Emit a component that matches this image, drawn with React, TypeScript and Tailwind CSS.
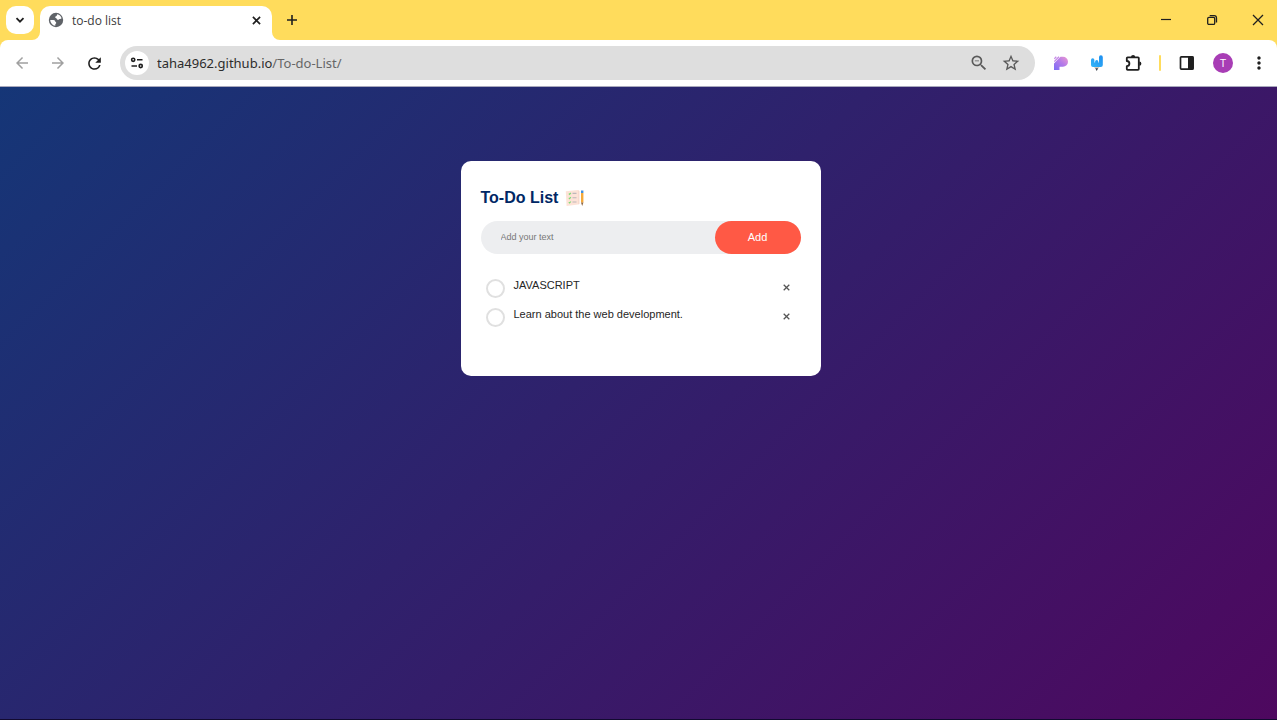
import { useState } from 'react'
import type { FormEvent, ReactNode } from 'react'
import {
  MdArrowBack,
  MdArrowForward,
  MdMoreVert,
  MdRefresh,
  MdStarOutline,
  MdZoomOut,
} from 'react-icons/md'

interface Task {
  id: number
  text: string
  done: boolean
}

const initialTasks: Task[] = [
  { id: 1, text: 'JAVASCRIPT', done: false },
  { id: 2, text: 'Learn about the web development.', done: false },
]

interface IconButtonProps {
  label: string
  className?: string
  children: ReactNode
}

function IconButton({ label, className = 'w-9 h-9', children }: IconButtonProps) {
  return (
    <button
      type="button"
      aria-label={label}
      className={`flex shrink-0 items-center justify-center ${className}`}
    >
      {children}
    </button>
  )
}

function CloseIcon({ size }: { size: number }) {
  return (
    <svg width={size} height={size} viewBox="0 0 10 10" fill="none" stroke="currentColor">
      <path d="M1 1l8 8M9 1l-8 8" strokeWidth="1.8" />
    </svg>
  )
}

function GlobeIcon() {
  return (
    <svg width="16" height="16" viewBox="0 0 16 16">
      <circle cx="8" cy="8" r="7.2" fill="#5f6368" />
      <path
        d="M9.3 2.3c2 .4 3.7 1.9 4.3 4-.9 1-2 .4-2.6 1.100-.8.9-2 .3-2.3-.6-.3-.9-1.600-.5-1.500-1.600.1-1 1.500-.8 1.600-1.600.1-.5.2-.9.5-1.300zM2.200 7.900h3.200c1.200 0 1.900.8 1.900 1.700 0 .7.9.5.9 1.300 0 .9-.9.7-.9 1.600v1.200c-2.900-.4-5-2.800-5.100-5.800z"
        fill="#fff"
      />
    </svg>
  )
}

function TabStrip() {
  return (
    <div className="flex h-10 items-start bg-[#ffdc5c] pt-1.5 pl-1.5 text-[#1f1f1f]">
      <IconButton label="Search tabs" className="h-7 w-7 rounded-[10px] bg-white">
        <svg width="10" height="10" viewBox="0 0 10 10" fill="none" stroke="currentColor">
          <path d="M1.5 3.2L5 6.7l3.5-3.5" strokeWidth="1.8" />
        </svg>
      </IconButton>
      <div className="relative ml-1.5 flex h-[34px] w-[232px] items-center rounded-t-[10px] bg-white pr-[10px] pb-1.5 pl-2">
        <svg className="absolute bottom-0 -left-2" width="8" height="8" viewBox="0 0 8 8">
          <path d="M8 0v8H0a8 8 0 0 0 8-8z" fill="#fff" />
        </svg>
        <svg className="absolute -right-2 bottom-0" width="8" height="8" viewBox="0 0 8 8">
          <path d="M0 0v8h8a8 8 0 0 1-8-8z" fill="#fff" />
        </svg>
        <GlobeIcon />
        <span className="ml-2 flex-1 pt-0.5 text-[12px] text-[#3c3c3c]">to-do list</span>
        <IconButton label="Close tab" className="h-3 w-3">
          <CloseIcon size={9} />
        </IconButton>
      </div>
      <IconButton label="New tab" className="ml-1.5 h-7 w-7">
        <svg width="12" height="12" viewBox="0 0 12 12" fill="none" stroke="currentColor">
          <path d="M6 1v10M1 6h10" strokeWidth="1.6" />
        </svg>
      </IconButton>
      <div className="ml-auto flex gap-[18px] pr-[5px]">
        <IconButton label="Minimize" className="h-7 w-7">
          <svg width="12" height="12" viewBox="0 0 12 12" stroke="currentColor">
            <path d="M1 5.5h10" strokeWidth="1.2" />
          </svg>
        </IconButton>
        <IconButton label="Restore" className="h-7 w-7">
          <svg width="12" height="12" viewBox="0 0 12 12" fill="none" stroke="currentColor" strokeWidth="1.3">
            <rect x="1.7" y="3.4" width="7" height="7" rx="1.2" />
            <path d="M3.7 1.6h4.5a2.3 2.3 0 0 1 2.3 2.3v4.5" />
          </svg>
        </IconButton>
        <IconButton label="Close" className="h-7 w-7">
          <svg width="12" height="12" viewBox="0 0 12 12" fill="none" stroke="currentColor">
            <path d="M1 1l10 10M11 1L1 11" strokeWidth="1.3" />
          </svg>
        </IconButton>
      </div>
    </div>
  )
}

function SiteInfoIcon() {
  return (
    <svg width="14" height="12" viewBox="0 0 14 12" fill="none" stroke="#1f1f1f" strokeWidth="1.6">
      <circle cx="3.2" cy="2.8" r="1.6" />
      <path d="M7 2.8h5.5M1.5 9H7" />
      <circle cx="10.7" cy="9" r="1.6" />
    </svg>
  )
}

function PenExtensionIcon() {
  return (
    <svg width="14" height="16" viewBox="0 0 14 16">
      <defs>
        <linearGradient id="bars" x1="0" y1="1" x2="1" y2="0">
          <stop offset="0" stopColor="#35b6f8" />
          <stop offset="1" stopColor="#1c8df0" />
        </linearGradient>
      </defs>
      <path
        d="M1 5a1.700 1.700 0 0 1 3.400 0v2.500h.7V6.500a1.600 1.600 0 0 1 3.200 0v1H9V2.200a1.900 1.900 0 0 1 3.800 0V10q0 2-2 2H3q-2 0-2-2z"
        fill="url(#bars)"
      />
      <path d="M4 12h5.500l-1.300 1.500h-3z" fill="#d9c9b8" />
      <path d="M5.200 13.300h3L6.700 16z" fill="#3c444e" />
    </svg>
  )
}

function RibbonExtensionIcon() {
  return (
    <svg width="14" height="14" viewBox="0 0 14 14">
      <defs>
        <linearGradient id="ribbon" x1="0" y1="1" x2="1" y2="0">
          <stop offset="0" stopColor="#7b6cf6" />
          <stop offset="0.55" stopColor="#b57be8" />
          <stop offset="1" stopColor="#ee9ad0" />
        </linearGradient>
      </defs>
      <path d="M0 7.500L6.500.8H9a5 5 0 0 1 0 10H5.500V14H0z" fill="url(#ribbon)" />
      <path d="M.3 5.500L5 .8M.3 2.800L2.300.8" stroke="#c58be6" strokeWidth="1.3" />
    </svg>
  )
}

function PuzzleIcon() {
  return (
    <svg width="20" height="20" viewBox="0 0 20 20">
      <path
        d="M4.600 4.300H15q.8 0 .8.800v11q0 .8-.8.8H4.600q-.8 0-.8-.8v-2.900a2.600 2.600 0 0 0 0-5.200V5.100q0-.8.8-.8z"
        fill="none"
        stroke="#1f1f1f"
        strokeWidth="1.8"
        strokeLinejoin="round"
      />
      <path d="M8 4a2.100 2.100 0 0 1 4.200 0zM16.300 8.600a2.100 2.100 0 0 1 0 4.200z" fill="#1f1f1f" />
    </svg>
  )
}

function Toolbar() {
  return (
    <div className="bg-[#ffdc5c]">
      <div className="flex h-[47px] items-center rounded-t-[8px] border-b border-[#a9a9bd] bg-white pl-1">
        <IconButton label="Back">
          <MdArrowBack size={18} className="text-[#a0a0a0]" />
        </IconButton>
        <IconButton label="Forward">
          <MdArrowForward size={18} className="text-[#a0a0a0]" />
        </IconButton>
        <IconButton label="Reload">
          <MdRefresh size={19} className="text-[#1f1f1f]" />
        </IconButton>
        <div className="mx-2 flex h-[34px] min-w-0 flex-1 items-center rounded-full bg-[#dedede] pr-2 pl-[5px]">
          <IconButton label="View site information" className="h-6 w-6 rounded-full bg-white">
            <SiteInfoIcon />
          </IconButton>
          <div className="ml-2 flex-1 truncate pt-0.5 font-['Noto_Sans',sans-serif] text-[13px] text-[#2c2c2c]">
            taha4962.github.io<span className="text-[#666]">/To-do-List/</span>
          </div>
          <IconButton label="Zoom" className="h-8 w-8">
            <MdZoomOut size={20} className="text-[#5a5a5a]" />
          </IconButton>
          <IconButton label="Bookmark this tab" className="h-8 w-8">
            <MdStarOutline size={20} className="text-[#5a5a5a]" />
          </IconButton>
        </div>
        <IconButton label="Ribbon extension">
          <RibbonExtensionIcon />
        </IconButton>
        <IconButton label="Pen extension">
          <PenExtensionIcon />
        </IconButton>
        <IconButton label="Extensions">
          <PuzzleIcon />
        </IconButton>
        <div className="mx-2 h-4 w-0.5 rounded-full bg-[#ffdc5c]" />
        <IconButton label="Side panel">
          <svg width="16" height="16" viewBox="0 0 16 16">
            <rect x="1.5" y="1.9" width="12.6" height="12.2" rx="0.8" fill="none" stroke="#1f1f1f" strokeWidth="1.7" />
            <path d="M9 1.5h5.5v13H9z" fill="#1f1f1f" />
          </svg>
        </IconButton>
        <IconButton label="Profile">
          <span className="flex h-5 w-5 items-center justify-center rounded-full bg-[#a83db5] text-[11px] text-white">
            T
          </span>
        </IconButton>
        <IconButton label="Menu">
          <MdMoreVert size={20} className="text-[#1f1f1f]" />
        </IconButton>
      </div>
    </div>
  )
}

function ChecklistIcon() {
  return (
    <svg width="19" height="18" viewBox="0 0 19 18">
      <path d="M.8 2.200L13 1v14.500L1.600 17z" fill="#fde3d7" />
      <path d="M13 1l1.500 1v13L13 15.500z" fill="#f8d9cc" />
      <g fill="none" strokeWidth="1.1">
        <path d="M3.800 4.600l.8.8 1.300-1.500M3.800 8.900l.8.8 1.300-1.500M3.800 13.200l.8.8 1.300-1.500" stroke="#7fdc78" />
        <path d="M7.500 4.400h4M7.500 8.700h4M7.500 13h4" stroke="#bdb6ba" />
      </g>
      <path d="M16 4h2.400v9.500H16z" fill="#f4a93a" />
      <path d="M16 1.500h2.400V4H16z" fill="#3f8fe0" />
      <path d="M16 13.500h2.400L17.200 17z" fill="#8f6540" />
    </svg>
  )
}

function TodoCard() {
  const [tasks, setTasks] = useState(initialTasks)
  const [text, setText] = useState('')

  const addTask = (e: FormEvent) => {
    e.preventDefault()
    if (!text.trim()) return
    setTasks([...tasks, { id: Date.now(), text, done: false }])
    setText('')
  }

  const toggleTask = (id: number) =>
    setTasks(tasks.map((t) => (t.id === id ? { ...t, done: !t.done } : t)))

  return (
    <div className="w-full max-w-[360px] rounded-[10px] bg-white px-5 pt-[25px] pb-[49px] font-['Liberation_Sans',Arial,sans-serif]">
      <h2 className="mb-[11px] flex items-center gap-[7px] text-[16px] leading-6 font-bold text-[#002765]">
        To-Do List <ChecklistIcon />
      </h2>
      <form onSubmit={addTask} className="mb-6 flex h-[33px] rounded-full bg-[#edeef0]">
        <input
          type="text"
          aria-label="Add your text"
          placeholder="Add your text"
          value={text}
          onChange={(e) => setText(e.target.value)}
          className="min-w-0 flex-1 bg-transparent pl-5 text-[9px] outline-none placeholder:text-[#777]"
        />
        <button type="submit" className="w-[86px] rounded-full bg-[#ff5945] text-[11px] text-white">
          Add
        </button>
      </form>
      <ul className="flex flex-col gap-[9px]">
        {tasks.map((task) => (
          <li key={task.id} className="flex h-5 items-center pr-2 pl-[5px]">
            <input
              id={`task-${task.id}`}
              type="checkbox"
              checked={task.done}
              onChange={() => toggleTask(task.id)}
              className="h-[19px] w-[19px] shrink-0 appearance-none rounded-full border-2 border-[#e0e0e0] checked:border-[#ff5945] checked:bg-[#ff5945]"
            />
            <label
              htmlFor={`task-${task.id}`}
              className={`ml-[9px] flex-1 self-start text-[11px] leading-[14px] ${
                task.done ? 'text-[#555] line-through' : 'text-[#262626]'
              }`}
            >
              {task.text}
            </label>
            <button
              type="button"
              aria-label={`Delete ${task.text}`}
              onClick={() => setTasks(tasks.filter((t) => t.id !== task.id))}
              className="flex h-[18px] w-3 items-center justify-center self-start text-[#555]"
            >
              <CloseIcon size={7} />
            </button>
          </li>
        ))}
      </ul>
    </div>
  )
}

export default function App() {
  return (
    <div className="flex min-h-screen flex-col font-['Open_Sans','Noto_Sans',sans-serif]">
      <header>
        <TabStrip />
        <Toolbar />
      </header>
      <main className="flex flex-1 items-start justify-center border-b border-[#120a30] bg-[linear-gradient(135deg,#153677,#4e085f)] pt-[74px] pl-1">
        <TodoCard />
      </main>
    </div>
  )
}
